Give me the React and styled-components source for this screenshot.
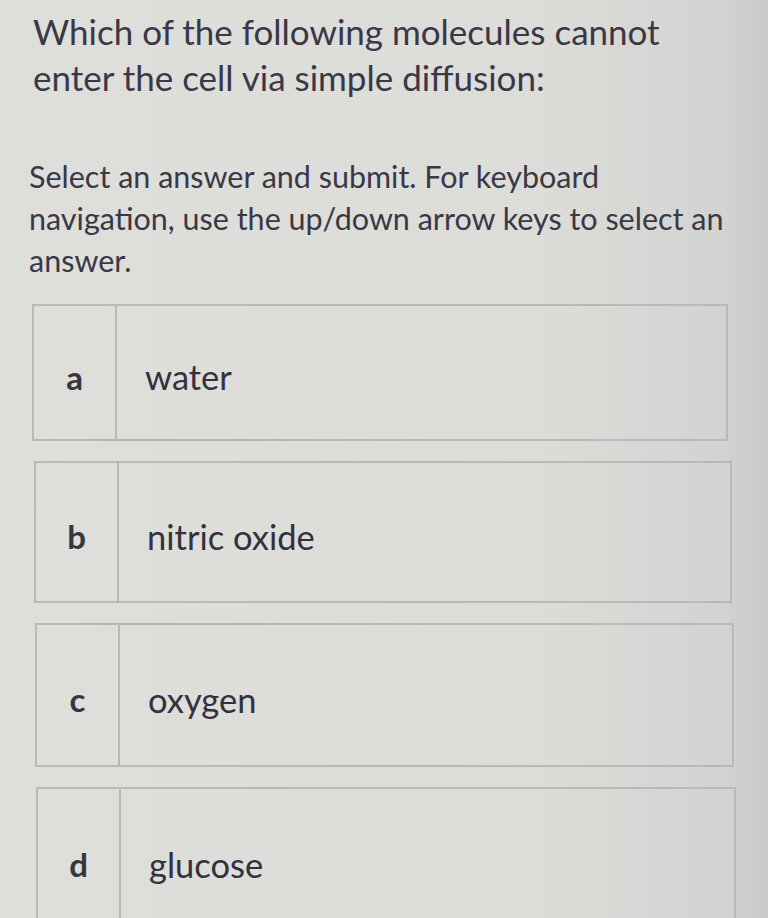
import React from 'react';
import styled, { createGlobalStyle } from 'styled-components';

const GlobalStyle = createGlobalStyle`
  html, body {
    margin: 0;
    padding: 0;
    height: 100%;
  }
  body {
    background: linear-gradient(90deg, #dededb 0%, #dcdcd9 70%, #d3d3d1 94%, #c9c9c7 100%);
    font-family: Lato, "Noto Sans", sans-serif;
    color: #3b3946;
  }
`;

const Page = styled.main`
  width: 768px;
  height: 918px;
  overflow: hidden;
  box-sizing: border-box;
  padding: 8px 40px 0 32px;
`;

const Question = styled.h1`
  margin: 0 0 0 1px;
  font-size: 35px;
  font-weight: 400;
  line-height: 46px;
  color: #3a3746;
`;

const Hint = styled.p`
  margin: 55px 0 0 -3px;
  font-size: 30.5px;
  line-height: 42px;
  color: #3a3746;
`;

const Options = styled.div`
  margin-top: 23px;
  display: flex;
  flex-direction: column;
  gap: 20px;
`;

const Option = styled.div`
  display: grid;
  grid-template-columns: 83px 1fr;
  height: ${(p) => p.$height}px;
  margin-left: ${(p) => p.$shift}px;
  margin-right: ${(p) => -p.$shift * 2}px;
  border: 2px solid #b9b9b7;
  box-sizing: border-box;
`;

const Letter = styled.div`
  display: flex;
  align-items: center;
  justify-content: center;
  padding-top: 8px;
  font-size: 33px;
  font-weight: 700;
  color: #383543;
  border-right: 2px solid #b9b9b7;
`;

const Answer = styled.div`
  display: flex;
  align-items: center;
  padding: 8px 0 0 28px;
  font-size: 34.5px;
  color: #33303f;
`;

const choices = [
  { key: 'a', text: 'water', shift: 0, height: 137 },
  { key: 'b', text: 'nitric oxide', shift: 2, height: 142 },
  { key: 'c', text: 'oxygen', shift: 3, height: 144 },
  { key: 'd', text: 'glucose', shift: 4, height: 146 },
];

export default function App() {
  return (
    <>
      <GlobalStyle />
      <Page>
        <Question>
          Which of the following molecules cannot
          <br />
          enter the cell via simple diffusion:
        </Question>
        <Hint>
          Select an answer and submit. For keyboard
          <br />
          navigation, use the up/down arrow keys to select an
          <br />
          answer.
        </Hint>
        <Options role="radiogroup">
          {choices.map((c) => (
            <Option
              key={c.key}
              $shift={c.shift}
              $height={c.height}
              role="radio"
              aria-checked="false"
            >
              <Letter>{c.key}</Letter>
              <Answer>{c.text}</Answer>
            </Option>
          ))}
        </Options>
      </Page>
    </>
  );
}
